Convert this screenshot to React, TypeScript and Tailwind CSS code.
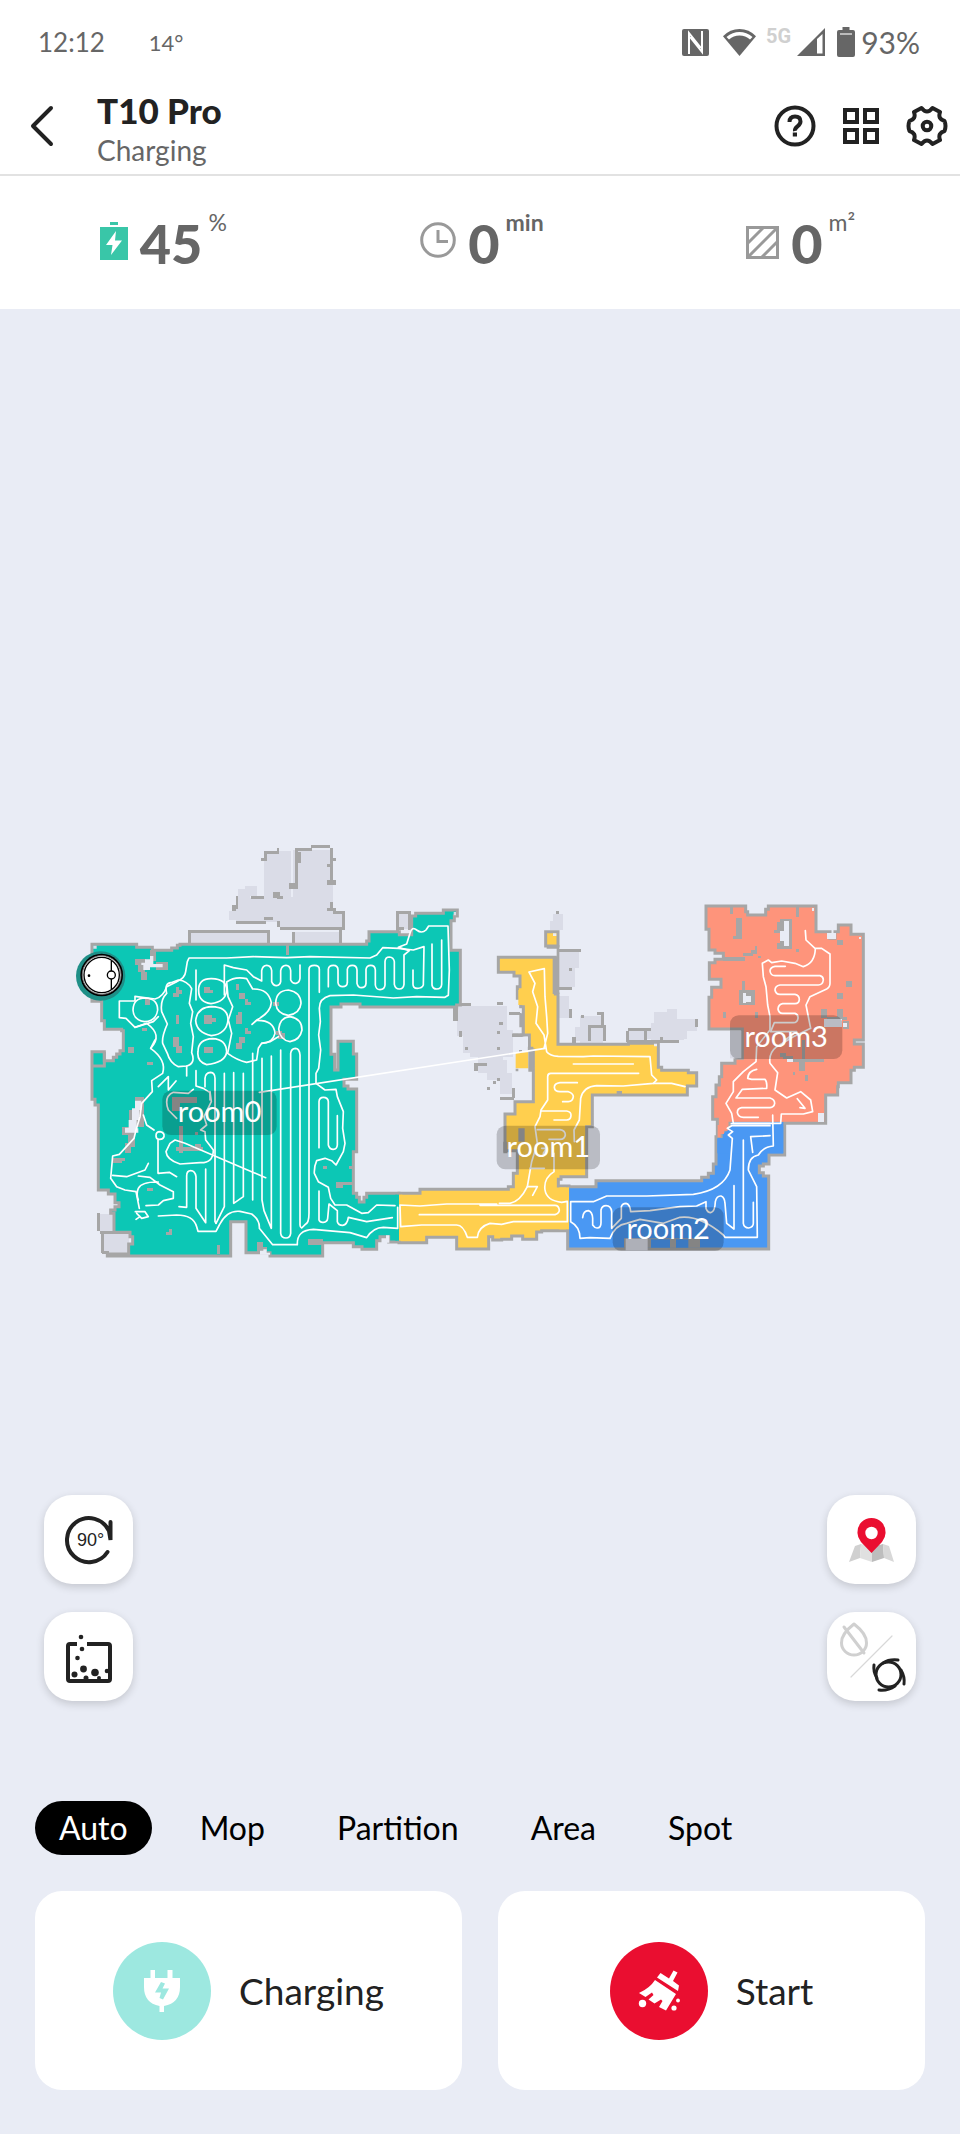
import React, { useState } from 'react';

type Block = [number, number, number, number];

const WALL = '#a6a6a6';
const UNKNOWN = '#dadce7';

const modes = ['Auto', 'Mop', 'Partition', 'Area', 'Spot'];

// Areas seen by the lidar but never cleaned
const unknownAreas: Block[] = [
  [357, 305, 242, 35], [505, 178, 35, 30], [525, 168, 37, 30], [497, 205, 290, 70], [478, 243, 40, 28],
  [582, 64, 80, 140], [668, 60, 120, 160], [620, 200, 170, 92], [700, 245, 120, 46], [672, 305, 142, 35],
  [983, 250, 36, 48], [85, 1152, 43, 50], [98, 1212, 78, 60],
  [1162, 528, 150, 90], [1180, 600, 150, 70], [1200, 640, 130, 40], [1225, 670, 75, 60], [1250, 690, 60, 60], [1290, 730, 35, 62],
  [1450, 252, 28, 28], [1440, 272, 38, 28], [1466, 365, 60, 50], [1468, 410, 46, 60], [1468, 498, 30, 66],
  [1515, 592, 40, 40], [1530, 558, 70, 80], [1555, 590, 50, 42], [1675, 600, 52, 36],
  [1752, 546, 70, 50], [1742, 580, 100, 50], [1725, 604, 125, 24], [1790, 538, 30, 20], [1820, 568, 60, 36],
];

const walls: Block[] = [
  [582, 64, 46, 8], [620, 54, 8, 16], [582, 64, 8, 28], [573, 84, 16, 8], [544, 197, 38, 9], [610, 187, 20, 18], [622, 197, 16, 9],
  [497, 197, 8, 40], [487, 225, 10, 18], [497, 272, 92, 9], [582, 262, 28, 9], [620, 272, 9, 20], [630, 290, 75, 9],
  [676, 62, 9, 115], [676, 66, 18, 34], [657, 158, 18, 18], [676, 55, 50, 8], [724, 45, 56, 9], [780, 55, 9, 108], [770, 150, 28, 16],
  [770, 102, 18, 8], [788, 84, 10, 8], [780, 215, 9, 28], [770, 234, 28, 9], [788, 244, 37, 9], [817, 250, 9, 45], [700, 290, 126, 10],
  [357, 300, 242, 9], [355, 300, 9, 40], [590, 300, 9, 40], [666, 305, 9, 35], [808, 295, 9, 45],
  [978, 244, 46, 9], [978, 244, 9, 58], [1015, 250, 9, 50], [978, 292, 24, 9],
  [1165, 518, 38, 9], [1150, 530, 14, 44], [1167, 602, 10, 18], [1185, 650, 9, 10], [1280, 602, 10, 10], [1280, 650, 10, 9],
  [1185, 650, 9, 9], [1213, 698, 38, 9], [1213, 698, 10, 26], [1280, 744, 9, 10], [1270, 752, 9, 10], [1252, 772, 9, 9],
  [1280, 517, 18, 9], [1288, 575, 10, 9], [1318, 548, 36, 8], [1327, 612, 30, 8], [1290, 802, 42, 8], [1327, 775, 8, 30],
  [1459, 244, 9, 9], [1460, 357, 74, 9], [1497, 414, 9, 9], [1468, 471, 38, 8], [1497, 536, 9, 28],
  [1534, 555, 9, 10], [1582, 546, 16, 9], [1592, 546, 9, 40], [1555, 584, 54, 9], [1555, 584, 8, 50], [1600, 584, 9, 50], [1507, 621, 10, 20],
  [1668, 604, 9, 32], [1675, 594, 67, 9], [1722, 600, 9, 34], [1675, 631, 152, 9], [1770, 621, 9, 10], [1875, 566, 9, 26],
  [82, 1150, 8, 54], [90, 1202, 94, 9], [92, 1210, 9, 60], [95, 1264, 22, 9],
];

const room0Blocks: Block[] = [
  [195, 387, 34, 18], [205, 397, 20, 30], [214, 425, 18, 26], [240, 360, 18, 34], [258, 395, 36, 26], [648, 346, 9, 30],
  [318, 470, 10, 30], [310, 488, 16, 12], [328, 480, 8, 12], [402, 471, 18, 18], [412, 480, 17, 9], [497, 461, 9, 18], [507, 490, 18, 18],
  [525, 508, 10, 16], [535, 516, 8, 8], [610, 517, 18, 10], [224, 508, 16, 16], [402, 556, 24, 26], [420, 563, 18, 12], [318, 555, 8, 28],
  [497, 555, 9, 28], [503, 545, 12, 38], [525, 593, 10, 18], [535, 602, 8, 9], [215, 593, 16, 10], [308, 622, 18, 28], [318, 648, 18, 20],
  [507, 622, 18, 16], [497, 638, 18, 20], [402, 650, 28, 18], [175, 650, 18, 18], [232, 696, 18, 10], [617, 602, 18, 14], [625, 610, 20, 18],
  [306, 802, 76, 16], [306, 802, 24, 40], [328, 888, 10, 80], [318, 950, 82, 12], [374, 905, 9, 9], [374, 942, 20, 16],
  [195, 802, 26, 90], [176, 840, 24, 60], [156, 890, 40, 24], [175, 905, 20, 45], [165, 940, 18, 28], [128, 984, 36, 10], [128, 990, 28, 8],
  [232, 1074, 18, 9], [288, 1206, 18, 9], [297, 1198, 10, 10], [440, 1244, 9, 28], [562, 1236, 18, 30], [580, 1252, 10, 12],
  [760, 1008, 10, 10], [798, 1055, 52, 10], [798, 1055, 20, 18], [836, 1008, 12, 10], [713, 1226, 46, 18],
];

const room3Blocks: Block[] = [
  [150, 50, 8, 22], [168, 84, 17, 62], [160, 138, 25, 10], [348, 52, 8, 30], [348, 178, 9, 9],
  [300, 86, 36, 90], [290, 95, 20, 30], [282, 120, 20, 10], [290, 158, 20, 18],
  [130, 200, 64, 12], [188, 188, 30, 10], [214, 180, 18, 12], [224, 168, 8, 14], [234, 197, 8, 8],
  [178, 300, 46, 46], [187, 272, 8, 30], [130, 366, 8, 18], [225, 366, 8, 18], [498, 272, 18, 18], [470, 310, 18, 18], [470, 150, 18, 16],
  [424, 357, 17, 26], [470, 357, 18, 30], [440, 380, 60, 10], [490, 392, 18, 24],
  [300, 490, 18, 10], [310, 498, 30, 10], [340, 508, 92, 8], [365, 450, 9, 60], [357, 510, 18, 34], [375, 555, 8, 18], [338, 545, 8, 10],
];

const room3Holes: Block[] = [
  [312, 94, 16, 74], [300, 122, 14, 30], [188, 310, 9, 28], [195, 318, 18, 18], [432, 386, 54, 26], [490, 400, 10, 10], [320, 507, 18, 9],
  [395, 54, 8, 9], [536, 140, 8, 8], [442, 130, 26, 18], [415, 670, 17, 26],
];

const rooms = [
  { name: 'room0', x: 277, y: 782, w: 343, h: 133 },
  { name: 'room1', x: 1280, y: 887, w: 310, h: 131 },
  { name: 'room2', x: 1628, y: 1132, w: 333, h: 131 },
  { name: 'room3', x: 1980, y: 556, w: 337, h: 131 },
];

function Blocks({ items, color }: { items: Block[]; color: string }) {
  return (
    <g fill={color} shapeRendering="crispEdges">
      {items.map(([x, y, w, h], i) => (
        <rect key={i} x={x} y={y} width={w} height={h} />
      ))}
    </g>
  );
}

function CleaningMap() {
  return (
    <svg viewBox="-210 0 2880 1320" className="block w-full" role="img" aria-label="Cleaning map">
      <Blocks items={unknownAreas} color={UNKNOWN} />
      <Blocks items={walls} color={WALL} />

      {/* room0 */}
      <path
        fill="#0cc7b5"
        stroke={WALL}
        strokeWidth="9"
        d="M66 343H200V352H247V361H305V354H322V346H330V343H890V333H897V305H988V314H1025V258H1037V250H1120V240H1162V258H1153V272H1143V361H1171V525H1160V531H870V522H813V531H783V673H794V720H804V634H850V672H860V748H822V768H834V777H860V965H850V1090H860V1102H868V1116H882V1102H890V1090H987V1236H956V1220H930V1232H920V1258H876V1250H850V1238H758V1278H600V1268H565V1268H528V1175H482V1278H112V1272H176V1242H188V1220H180V1207H132V1150H122V1140H135V1130H147V1118H135V1092H115V1080H85V825H75V808H66V665H103V692H130V682H140V672H150V662H160V602H155V598H103V572H95V514H66Z"
      />
      <Blocks items={room0Blocks} color={WALL} />
      <path fill="#e9ecf5" d="M225 388H240V378H250V402H278V412H240V420H220V405H214V398H225ZM195 812H214V840H208V870H200V895H205V908H165V893H176V870H186V835H195ZM580 1258H590V1268H600V1274H570V1262H580ZM948 1216H958V1238H948ZM996 300H1018V309H996Z" />
      <path fill="none" stroke={WALL} strokeWidth="9" d="M68 708H103V665" />
      <path fill={UNKNOWN} d="M70 347H80V356H70ZM1151 246H1158V256H1151Z" />

      {/* room1 and room2 */}
      <g transform="translate(1230 180)">
        <path
          fill="#ffcf4e"
          stroke={WALL}
          strokeWidth="9"
          d="M55 202H226V312H234V463H445V460H535V532H545V541H625V548H650V588H622V615H337V710H320V860H243V868H235V888H267V1022H185V1026H170V1048H128V1038H95V1048H65V1050H38V1040H26V1077H-70V1042H-160V1058H-243V910H-180V898H85V890H100V850H112V782H75V672H105V635H160V480H148V435H130V350H122V325H112V290H120V258H102V247H55Z"
        />
        <path fill="#ffcf4e" stroke={WALL} strokeWidth="9" d="M197 125H234V168H197Z" />
        <path fill="#ffcf4e" d="M107 487H145V535H107ZM115 300H130V345H115Z" />
        <path fill={WALL} d="M218 200H238V312H218ZM230 165H238V210H230ZM97 430H130V440H97ZM118 370H126V430H118ZM145 470H160V545H145ZM87 366H120V375H87ZM200 168H234V176H200ZM107 536H115V544H107ZM117 480H126V488H117ZM410 603H426V612H410ZM115 715H134V755H115ZM70 755H82V790H70Z" />
        <path fill="#e9ecf5" d="M116 412H125V430H116ZM136 440H144V470H136ZM219 130H229V138H219ZM522 461H531V469H522Z" />
        <path
          fill="#4a98f3"
          stroke={WALL}
          strokeWidth="9"
          d="M263 890H348V872H665V862H685V850H700V822H708V740H730V720H748V697H912V705H914V795H867V822H850V828H838V848H850V858H866V1077H263Z"
        />
        <path fill="#ffcf4e" d="M238 892H267V1018H238Z" />
        <path fill={WALL} d="M432 1045H660V1073H432Z" />
        <path fill={UNKNOWN} d="M437 1046H503V1082H437Z" />
        <path fill="#4a98f3" d="M513 1048H570V1073H513ZM588 1048H625V1073H588Z" />
      </g>

      {/* room3 */}
      <g transform="translate(1830 180)">
        <path
          fill="#fe947b"
          stroke={WALL}
          strokeWidth="9"
          d="M78 48H197V65H203V75H257V58H265V48H408V125H450V145H465V125H475V105H513V133H550V450H523V462H550V532H523V541H513V578H475V590H473V615H437V700H150V715H130V735H112V688H98V620H108V585H118V560H125V520H165V505H187V417H87V322H95V292H123V268H88V218H105V208H130V190H105V180H87V118H78Z"
        />
        <path fill="#4a98f3" d="M154 696H310V790H112V745H128V728H140V712H154Z" />
        <path fill="#fe947b" d="M113 705H143V722H132V732H122V742H113Z" />
        <path fill={UNKNOWN} d="M150 422H184V505H150Z" />
        <Blocks items={room3Blocks} color={WALL} />
        <Blocks items={room3Holes} color="#e9ecf5" />
      </g>
      <path fill="#0cc7b5" d="M976 1094H987V1232H976Z" />
      <path fill="#ffcf4e" d="M987 1094H997V1232H987Z" />

      {/* Path of the robot */}
      <g fill="none" stroke="#fff" strokeWidth="5" strokeLinecap="round" strokeLinejoin="round">
        <path d="M568 787L1425 655" />
        <path d="M265 560L250 575 195 592 168 565 148 563V513H195V499L255 507Q280 500 290 470L320 455Q345 445 347 425L352 395 357 384H470L550 380 650 383 720 380 900 384 920 375 938 353 985 355 1030 360 1062 350 1060 465Q1056 475 1042 475 1028 475 1029 460V420" />
        <path d="M378 420V510M463 495V405L490 413 530 420 550 440 575 453V422Q578 406 590 406 603 406 605 422V455Q610 468 620 467 630 466 632 455V422Q635 406 648 406 660 406 662 422V450Q668 462 678 460 688 458 690 445V405" />
        <path d="M290 490Q283 460 303 458L325 450Q352 452 365 476L358 520 368 545 362 580 370 620 365 668Q378 700 350 708L325 710Q300 700 292 670L278 640Q275 620 292 582L275 545Q270 510 290 490" />
        <path d="M350 708V738" />
        <path d="M386 483Q384 445 425 446 470 447 470 480 468 515 423 521 386 516 386 483ZM377 572Q382 531 425 530 474 531 474 570 470 612 424 617 380 608 377 572ZM384 665Q384 628 428 626 468 628 470 665 467 698 410 704 380 695 384 665ZM189 540Q190 504 226 504 263 506 263 540 258 574 224 575 190 570 189 540Z" />
        <path d="M470 456Q495 438 530 446L548 477Q595 475 604 518 602 548 560 570L546 583 560 571Q612 570 615 610 608 640 575 640L565 655 560 690 530 697Q500 690 473 670L485 610 475 570 488 530 474 500 470 456" />
        <path d="M617 520Q618 482 655 480 692 486 693 520 690 550 655 556 621 552 617 520ZM626 597Q630 562 660 560 696 566 696 600 690 630 660 635 630 630 626 597ZM575 640L600 635 625 620" />
        <path d="M748 487V418Q748 406 733 406 717 406 717 418V1150Q717 1180 706 1183L695 1194Q690 1192 690 1185V675Q688 655 676 655 664 656 662 670V1210Q660 1224 648 1224 634 1224 632 1210V660" />
        <path d="M775 470V418Q776 406 790 406 804 406 804 420V458Q806 470 818 470 831 470 832 458V418Q834 406 847 406 860 406 861 420V460Q864 473 874 473 887 473 888 460V418Q890 406 902 406 915 406 916 420V465Q918 479 930 479 944 478 945 465V395Q946 381 958 381 971 382 973 395V463Q976 477 988 477 1000 477 1002 463V375L1018 362 985 352 1010 342 1020 310Q1026 288 1040 300 1055 312 1068 300L1076 288H1134L1138 420 1135 496 1125 502 1040 500 970 504 850 495 780 497Q748 505 748 535L751 575 746 615 752 660 746 715 738 730 738 760 765 780 798 778 802 800 820 845 818 895 825 940 820 965 798 1005 785 992 765 985 740 992Q732 1010 733 1030L745 1055 775 1072 782 1105 795 1125 830 1125 875 1150 895 1148 920 1125 975 1127" />
        <path d="M1086 342V465Q1088 477 1100 477 1114 477 1115 463V330" />
        <path d="M747 953V815Q748 802 760 802 774 802 775 815V945Q778 958 790 958 801 958 802 945V857" />
        <path d="M747 1083V1170Q750 1178 760 1177 772 1176 773 1165L777 1122 802 1142V1175Q805 1186 818 1186 832 1184 835 1162L890 1175 967 1163" />
        <path d="M265 1158L320 1155Q370 1155 380 1190L384 1204H438L448 1185Q470 1140 510 1144L545 1152Q570 1170 568 1195L608 1244H682Q680 1200 730 1198L840 1208 890 1223Q910 1192 940 1192L983 1195V1132" />
        <path d="M463 730V1130L438 1180M491 728V1120L520 1100V730M548 670V1110M576 685V1110L582 1142 604 1195V678" />
        <path d="M378 722V768L400 775 420 788V810M405 770V745Q406 728 422 727 435 728 435 745V1175L438 1180M407 1017V1178L378 1135V1040Q375 1022 362 1022 350 1022 350 1038V1132L327 1130" />
        <path d="M255 630L242 655Q290 690 278 730L245 752 247 785 215 820 210 860 198 900 192 925 148 973 128 978 122 1045 140 1070 165 1080 198 1085 208 1135" />
        <path d="M220 855L230 885 252 900M265 770L295 740V780L318 753M320 865L295 840Q280 800 310 787L355 790 370 778M420 785L424 815 402 860 410 885 392 900 405 905 407 930 430 960Q430 1000 390 998L330 1002Q290 990 288 965L300 940 315 930 345 940 587 1043" />
        <path d="M258 917Q258 905 270 905 284 908 282 920 278 930 266 928 258 926 258 917ZM264 928V1030L298 1027 320 1040M128 1036L170 1040 225 1020 235 1000M205 1038L240 1042 270 1065 310 1085V1105L280 1112 265 1125 228 1127M265 1056Q215 1055 205 1075 198 1090 205 1110M196 1145H225L235 1160 215 1165 200 1150 210 1160 198 1168M195 592L230 580Q280 615 242 655" />
      </g>
      <g transform="translate(1230 180)" fill="none" stroke="#fff" strokeWidth="5" strokeLinecap="round" strokeLinejoin="round">
        <path d="M58 940H90Q120 935 142 890L155 815 172 760 165 710 180 680 183 660 203 630V560Q203 550 212 550H476" />
        <path d="M192 475L203 430 200 380 195 320 193 236 147 246 165 280 158 305 173 350 168 400 192 435 200 485Q210 498 235 499L310 500 340 498 510 500 515 555 530 570 520 580 430 588 350 587Q310 590 302 625L298 690 282 720 283 755" />
        <path d="M520 580L575 580 615 590M280 522H460M292 578H240Q223 580 223 592 224 605 240 605H265Q280 610 280 620 278 635 265 635H248M183 663H260Q274 665 273 677 272 690 260 690H222M172 719H240Q256 722 256 735 254 748 240 748H207" />
        <path d="M193 835H150M142 890H172L158 916M185 775H200L190 790M222 790V845Q190 865 195 900 200 932 245 937L262 934V995H100L65 1003 30 1000Q-5 1010 -8 1042H-38Q-50 1005 -70 1005H-175L-238 1010 -240 945 -180 948 -100 942 50 942M-182 974H225Q238 970 238 960 236 946 225 946H0" />
        <path d="M272 935L340 935 380 918 500 918 640 913Q730 900 750 840L757 745 745 735 758 725 742 715 755 707H870M272 937V995Q300 1010 300 1045L330 1043 390 1045Q405 1005 440 1000L480 988 550 1000 600 982Q660 975 730 1035L735 1042H832L830 890 805 840Q805 800 835 795 850 770 880 768L878 675" />
        <path d="M308 983Q310 962 325 962 337 965 338 985V1005Q345 1015 352 1014 363 1013 363 998V960Q366 947 378 947 393 947 395 965V1015L424 985V950Q427 940 438 940 450 942 452 965L510 962 600 950 650 948 678 935V955Q683 968 692 968 705 965 706 935 710 917 723 918 734 922 735 940L740 1000 762 1017V887" />
        <path d="M790 750V1000Q792 1013 806 1014 820 1012 820 1000V937M818 787L812 740 870 737" />
      </g>
      <g transform="translate(1830 180)" fill="none" stroke="#fff" strokeWidth="5" strokeLinecap="round" strokeLinejoin="round">
        <path d="M376 122L378 150 405 175 425 175 450 192V280Q450 292 440 297L390 320 378 345 392 415 340 440 290 470Q265 490 270 520L293 548 285 600 320 624 362 605 392 630 398 665 370 672 304 672 302 700H160L155 670 138 640 160 605V575L190 545 228 515 230 470 270 420V380L263 345 258 290 250 260 247 220 265 210 275 218 305 213 345 220 370 230Q405 220 406 175" />
        <path d="M316 229H285Q270 232 270 243 272 257 285 257H420Q430 260 430 270 428 285 415 285H300Q285 288 285 300 287 313 300 313H345Q358 316 358 328 357 341 345 341H308Q295 344 294 357 296 370 308 370H345Q355 373 354 385 352 398 340 398H283L272 425H350L315 450" />
        <path d="M230 538Q205 542 203 565L215 568H255Q262 575 260 595L187 598 168 624H270Q284 628 284 640 282 652 270 653H185Q172 655 172 668 175 682 190 682H235M352 626L375 655 360 653M154 701H270" />
      </g>

      {/* Room names */}
      {rooms.map((room) => (
        <g key={room.name}>
          <rect x={room.x} y={room.y} width={room.w} height={room.h} rx="26" fill="#000" fillOpacity="0.2" />
          <text x={room.x + room.w / 2} y={room.y + 95} textAnchor="middle" fontSize="87" fill="#fff">
            {room.name}
          </text>
        </g>
      ))}

      {/* Robot on its dock */}
      <circle cx="92" cy="438" r="74" fill="#1f8f87" />
      <circle cx="95" cy="435" r="64" fill="#000" />
      <circle cx="95" cy="435" r="58" fill="#fff" stroke="#777" strokeWidth="3" />
      <circle cx="95" cy="435" r="53" fill="#fff" stroke="#000" strokeWidth="4" />
      <path d="M124 392V478" stroke="#000" strokeWidth="4" />
      <circle cx="124" cy="435" r="12" fill="#fff" stroke="#000" strokeWidth="4" />
      <circle cx="57" cy="437" r="4" fill="#000" />
    </svg>
  );
}

function StatusBar() {
  return (
    <div className="flex h-[84px] items-center justify-between pl-[38px] pr-10 text-[#666]">
      <div className="flex items-center gap-11">
        <span className="text-[26px]">12:12</span>
        <span className="text-[22px]">14°</span>
      </div>
      <div className="flex items-center">
        <svg className="mr-3.5 h-[27px] w-[27px]" viewBox="0 0 27 27">
          <rect width="27" height="27" rx="2" fill="#666" />
          <path d="M7 25V4L19 19M20 2V23L8 8" fill="none" stroke="#fff" strokeWidth="2" />
        </svg>
        <svg className="mr-2.5 h-7 w-[33px]" viewBox="0 0 33 28">
          <path d="M16.500 28L0 8.200Q7 1 16.500 1T33 8.200Z" fill="#666" />
          <path d="M3.500 9Q9.500 4 16.500 4T29.500 9L27 11.500Q22.500 7.500 16.500 7.500T6 11.500Z" fill="#fff" />
        </svg>
        <span className="mb-3 mr-1.5 font-[Roboto,sans-serif] text-[20px] leading-5 font-bold text-[#d0d0d0]">5G</span>
        <svg className="mr-3 h-7 w-7" viewBox="0 0 28 28">
          <path d="M0 28L28 0V28Z" fill="#666" />
          <path d="M20 11L25.500 6V25.500H20Z" fill="#fff" />
        </svg>
        <svg className="mr-1.5 h-[30px] w-[18px]" viewBox="0 0 18 30">
          <path d="M5.500 0H12.500V3H16Q18 3 18 5V28Q18 30 16 30H2Q0 30 0 28V5Q0 3 2 3H5.500Z" fill="#666" />
          <path d="M3 6H15V8H3Z" fill="#bbb" />
        </svg>
        <span className="text-[30px]">93%</span>
      </div>
    </div>
  );
}

function Header() {
  return (
    <header className="flex h-[92px] items-start border-b-2 border-[#e2e2e2] pl-7 pr-3">
      <button aria-label="Back" className="mt-5">
        <svg className="h-11 w-7" viewBox="0 0 28 44" fill="none" stroke="#222" strokeWidth="4" strokeLinecap="round" strokeLinejoin="round">
          <path d="M23 4L5 22 23 40" />
        </svg>
      </button>
      <div className="ml-[41px] mt-1 flex-1">
        <h1 className="text-[35px] leading-[45px] font-black text-[#222]">T10 Pro</h1>
        <p className="text-[28px] leading-[34px] text-[#666]">Charging</p>
      </div>
      <div className="mt-[21px] flex items-center gap-[26px]">
        <button aria-label="Help">
          <svg className="h-[42px] w-[42px]" viewBox="0 0 42 42" fill="none" stroke="#222">
            <circle cx="21" cy="21" r="18.500" strokeWidth="4" />
            <path d="M15.500 17Q15.500 11.500 21 11.500T26.500 16.500Q26.500 19 23.500 21.300T21 26" strokeWidth="4" />
            <path d="M18.800 27.500H23V31.500H18.800Z" fill="#222" stroke="none" />
          </svg>
        </button>
        <button aria-label="Widgets">
          <svg className="h-[38px] w-[38px]" viewBox="0 0 38 38" fill="none" stroke="#222" strokeWidth="4">
            <path d="M3 3H15V15H3ZM23 3H35V15H23ZM3 23H15V35H3ZM23 23H35V35H23Z" />
          </svg>
        </button>
        <button aria-label="Settings">
          <svg className="h-[42px] w-[42px]" viewBox="0 0 42 42" fill="none" stroke="#222" strokeWidth="4" strokeLinejoin="round">
            <path d="M15.500 3L8 7Q10.500 14 3.500 16Q1.500 21 3.500 26Q10.500 28 8 35L15.500 39Q21 32 26.500 39L34 35Q31.500 28 38.500 26Q40.500 21 38.500 16Q31.500 14 34 7L26.500 3Q21 10 15.500 3Z" />
            <circle cx="21" cy="21" r="4.300" />
          </svg>
        </button>
      </div>
    </header>
  );
}

function Stat({ icon, value, unit, bold }: { icon: React.ReactNode; value: string; unit: string; bold?: boolean }) {
  return (
    <div className="flex items-start justify-center text-[#666]">
      <div className="mt-[14px]">{icon}</div>
      <span className="ml-3 mt-1 text-[54px] leading-[64px] font-black">{value}</span>
      <span className={`ml-1.5 text-[23px] leading-7 ${bold ? 'font-bold' : ''}`}>{unit}</span>
    </div>
  );
}

function Stats() {
  return (
    <section className="grid h-[133px] grid-cols-3 pt-[32px] pl-1">
      <Stat
        value="45"
        unit="%"
        icon={
          <svg className="h-[38px] w-7" viewBox="0 0 28 38">
            <path d="M10 0H18V3H10ZM0 5H28V38H0Z" fill="#39c6a8" />
            <path d="M16 9L6 23H12.500L11 33 22 18.500H15Z" fill="#fff" />
          </svg>
        }
      />
      <Stat
        value="0"
        unit="min"
        bold
        icon={
          <svg className="h-9 w-9" viewBox="0 0 36 36" fill="none" stroke="#999" strokeWidth="3">
            <circle cx="18" cy="18" r="16.300" />
            <path d="M18 8V19.500H28" />
          </svg>
        }
      />
      <Stat
        value="0"
        unit="m²"
        icon={
          <svg className="mt-1 h-[33px] w-[33px]" viewBox="0 0 33 33" fill="none" stroke="#999" strokeWidth="3">
            <path d="M1.500 1.500H31.500V31.500H1.500ZM2 17L17 2M3 30L30 3M16 31L31 16" />
          </svg>
        }
      />
    </section>
  );
}

function MapButton({ label, children }: { label: string; children: React.ReactNode }) {
  return (
    <button
      aria-label={label}
      className="flex h-[89px] w-[89px] items-center justify-center rounded-[28px] bg-white shadow-[0_3px_8px_rgba(0,0,0,0.16)]"
    >
      {children}
    </button>
  );
}

function MapControls() {
  return (
    <div className="flex justify-between px-11">
      <div className="flex flex-col gap-[28px]">
        <MapButton label="Rotate map">
          <svg className="h-[89px] w-[89px]" viewBox="0 0 89 89" fill="none" stroke="#222" strokeWidth="4" strokeLinecap="round">
            <path d="M63.500 57A22 22 0 1 1 65 36L66.500 45V27" />
            <text x="33" y="51" fontSize="18" fill="#222" stroke="none" className="font-['Liberation_Sans',sans-serif]">90°</text>
          </svg>
        </MapButton>
        <MapButton label="Dust level">
          <svg className="h-[89px] w-[89px]" viewBox="0 0 89 89" fill="#222">
            <path d="M33 32H26Q24 32 24 34V67Q24 69 26 69H64Q66 69 66 67V34Q66 32 64 32H43" fill="none" stroke="#222" strokeWidth="4" />
            <circle cx="37" cy="25" r="2.300" />
            <circle cx="38" cy="37" r="2.300" />
            <circle cx="33.500" cy="46" r="2.300" />
            <circle cx="39.500" cy="57" r="3.400" />
            <circle cx="30.500" cy="62.500" r="3" />
            <circle cx="51" cy="60.500" r="3.800" />
            <circle cx="63" cy="59" r="2.300" />
            <circle cx="42" cy="66" r="2.500" />
            <circle cx="55" cy="66" r="2" />
          </svg>
        </MapButton>
      </div>
      <div className="flex flex-col gap-[28px]">
        <MapButton label="Saved maps">
          <svg className="h-[89px] w-[89px]" viewBox="0 0 89 89">
            <path d="M28 51L34 49 33 63 22 67Z" fill="#d0d0d0" />
            <path d="M34 49L45 52V67L33 63Z" fill="#e0e0e0" />
            <path d="M45 52L56 49 57 63 45 67Z" fill="#bdbdbd" />
            <path d="M56 49L62 51 67 67 57 63Z" fill="#d8d8d8" />
            <path d="M44.500 58L34 47Q30 42 30.500 37A14 14 0 0 1 58.500 37Q59 42 55 47Z" fill="#ea0e30" />
            <circle cx="44.500" cy="38" r="6.200" fill="#fff" />
          </svg>
        </MapButton>
        <MapButton label="Suction and water">
          <svg className="h-[89px] w-[89px]" viewBox="0 0 89 89" fill="none" strokeLinecap="round" strokeLinejoin="round">
            <path d="M27 12Q14 22 14.500 31A12.500 12 0 0 0 39.500 31Q40 22 27 12ZM17 15L37 41" stroke="#d0d0d0" strokeWidth="3" />
            <path d="M24 65L65 24" stroke="#d8d8d8" strokeWidth="1.200" />
            <g stroke="#222" strokeWidth="3">
              <circle cx="61.500" cy="62.500" r="12.500" />
              <path d="M47 53Q46 60 50 66M71 48Q62 47 56 51M77 72Q78 65 74 58M52 78Q61 79 68 74" />
            </g>
          </svg>
        </MapButton>
      </div>
    </div>
  );
}

export default function App() {
  const [mode, setMode] = useState('Auto');

  return (
    <div className="min-h-screen bg-[#e9ecf5] font-[Lato,'Liberation_Sans',sans-serif]">
      <div className="bg-white">
        <StatusBar />
        <Header />
        <Stats />
      </div>

      <main className="pt-[521px]">
        <CleaningMap />
        <div className="mt-[225px]">
          <MapControls />
        </div>

        <nav className="mt-[100px] flex gap-6 px-[35px]">
          {modes.map((item) => (
            <button
              key={item}
              onClick={() => setMode(item)}
              className={`h-[54px] rounded-full px-6 text-[32px] ${item === mode ? 'bg-black text-white' : 'text-black'}`}
            >
              {item}
            </button>
          ))}
        </nav>

        <div className="grid grid-cols-2 gap-9 px-[35px] pt-9 pb-11">
          <button className="flex h-[199px] items-center justify-center gap-7 rounded-[27px] bg-white text-[37px] text-[#222]">
            <svg className="h-[98px] w-[98px]" viewBox="0 0 98 98">
              <circle cx="49" cy="49" r="49" fill="#9de8e0" />
              <path d="M37.500 28H42V36H54.500V28H59.500V36H67V45Q67 61 51 64V70H46.500V64Q31 61 31 45V36H37.500Z" fill="#fff" />
              <path d="M48 40L42 50.500H48L46.500 56 50 57.500 56 46.500H49.500L52 41.500Z" fill="#9de8e0" />
            </svg>
            Charging
          </button>
          <button className="flex h-[199px] items-center justify-center gap-7 rounded-[27px] bg-white text-[37px] text-[#222]">
            <svg className="h-[98px] w-[98px]" viewBox="0 0 98 98" fill="#fff">
              <circle cx="49" cy="49" r="49" fill="#ea0e30" />
              <path d="M50.500 31L59 36.500 63.500 28.500 67.500 30.500 63 39 69 43.500 68 49 47 35.500Z" />
              <path d="M45 38L66 52 56 68.500 49 65 52.500 59 51 57.500 44.500 61.500 38.500 57.500 43.500 53 42 50.500 35.500 55 29 51Q40 46 45 38Z" />
              <circle cx="32.500" cy="61.500" r="3.700" />
              <circle cx="64" cy="66" r="2.600" />
              <circle cx="68" cy="58.500" r="1.900" />
            </svg>
            Start
          </button>
        </div>
      </main>
    </div>
  );
}
